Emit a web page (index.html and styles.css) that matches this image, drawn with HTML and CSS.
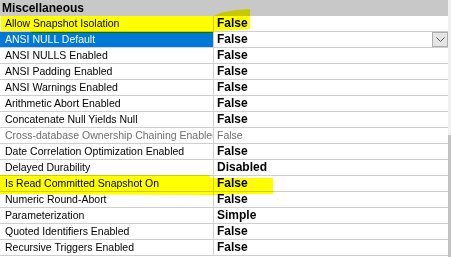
FILE: index.html
```html
<!DOCTYPE html>
<html lang="en">
<head>
    <meta charset="UTF-8">
    <title>Database Properties - Miscellaneous</title>
    <link rel="stylesheet" href="styles.css">
</head>
<body>
    <div class="propgrid">
        <div class="grid">
            <div class="category">Miscellaneous</div>

            <div class="row">
                <div class="name">Allow Snapshot Isolation</div>
                <div class="value">False</div>
            </div>
            <div class="row selected">
                <div class="name">ANSI NULL Default</div>
                <div class="value">False
                    <span class="drop-btn">
                        <svg width="9" height="5" viewBox="0 0 9 5"><path d="M0.5 0.5 L4.5 4.5 L8.5 0.5" fill="none" stroke="#5a5a5a" stroke-width="1"/></svg>
                    </span>
                </div>
            </div>
            <div class="row">
                <div class="name">ANSI NULLS Enabled</div>
                <div class="value">False</div>
            </div>
            <div class="row">
                <div class="name">ANSI Padding Enabled</div>
                <div class="value">False</div>
            </div>
            <div class="row">
                <div class="name">ANSI Warnings Enabled</div>
                <div class="value">False</div>
            </div>
            <div class="row">
                <div class="name">Arithmetic Abort Enabled</div>
                <div class="value">False</div>
            </div>
            <div class="row">
                <div class="name">Concatenate Null Yields Null</div>
                <div class="value">False</div>
            </div>
            <div class="row readonly">
                <div class="name">Cross-database Ownership Chaining Enabled</div>
                <div class="value">False</div>
            </div>
            <div class="row">
                <div class="name">Date Correlation Optimization Enabled</div>
                <div class="value">False</div>
            </div>
            <div class="row">
                <div class="name">Delayed Durability</div>
                <div class="value">Disabled</div>
            </div>
            <div class="row">
                <div class="name">Is Read Committed Snapshot On</div>
                <div class="value">False</div>
            </div>
            <div class="row">
                <div class="name">Numeric Round-Abort</div>
                <div class="value">False</div>
            </div>
            <div class="row">
                <div class="name">Parameterization</div>
                <div class="value">Simple</div>
            </div>
            <div class="row">
                <div class="name">Quoted Identifiers Enabled</div>
                <div class="value">False</div>
            </div>
            <div class="row">
                <div class="name">Recursive Triggers Enabled</div>
                <div class="value">False</div>
            </div>

            <!-- highlighter marks drawn over the grid -->
            <svg class="marker" width="448" height="257" viewBox="0 0 448 257">
                <path d="M1 16 L214 16 L220 13 L236 10 L250 9 L250 29 L236 30 L214 31 L213 33 L32 33 L30 31 L1 31 Z" fill="#ffff00"/>
                <path d="M0 175 L209 175 L211 178 L273 178 L273 194 L240 194 L214 195 L200 195 L0 194 Z" fill="#ffff00"/>
            </svg>
        </div>
        <div class="scrollbar">
            <div class="thumb"></div>
        </div>
    </div>
</body>
</html>
```

FILE: styles.css
```css
body {
    margin: 0;
    background-color: #fff;
    font-family: "Liberation Sans", Arial, sans-serif;
    font-size: 10.5px;
    color: #000;
}

.propgrid {
    display: flex;
    width: 451px;
    height: 257px;
    overflow: hidden;
}

.grid {
    position: relative;
    width: 448px;
}

.category {
    height: 16px;
    line-height: 16px;
    padding-left: 2px;
    background-color: #c8c8c8;
    font-weight: bold;
    font-size: 12px;
}

.row {
    display: flex;
    height: 15px;
    border-bottom: 1px solid #cfcfcf;
}

.name {
    width: 208px;
    padding-left: 5px;
    border-right: 1px solid #cfcfcf;
    line-height: 15px;
    white-space: nowrap;
    overflow: hidden;
}

.value {
    flex: 1;
    display: flex;
    align-items: center;
    padding-left: 3px;
    font-weight: bold;
    font-size: 12px;
    line-height: 15px;
}

.row.selected .name {
    background-color: #0078d7;
    color: #fff;
}

.row.readonly .name,
.row.readonly .value {
    color: #6d6d6d;
}

.row.readonly .value {
    font-weight: normal;
    font-size: 10.5px;
}

.drop-btn {
    margin-left: auto;
    width: 14px;
    height: 13px;
    border: 1px solid #adadad;
    background-color: #e5e5e5;
    display: flex;
    align-items: center;
    justify-content: center;
}

.marker {
    position: absolute;
    left: 0;
    top: 0;
    mix-blend-mode: multiply;
    pointer-events: none;
}

.scrollbar {
    flex: 1;
    background-color: #f0f0f0;
    display: flex;
    flex-direction: column;
    justify-content: flex-end;
}

.thumb {
    height: 122px;
    background-color: #c2c2c2;
}
```
